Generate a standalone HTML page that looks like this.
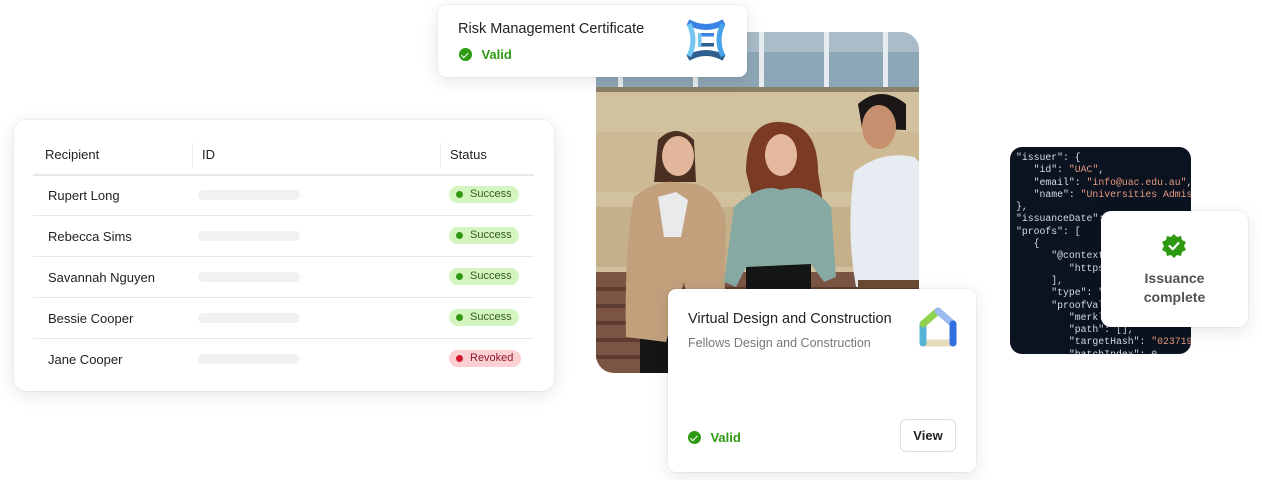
<!DOCTYPE html>
<html><head><meta charset="utf-8"><style>
*{margin:0;padding:0;box-sizing:border-box}
body{width:1262px;height:480px;background:#fff;position:relative;overflow:hidden;font-family:"Liberation Sans",sans-serif;color:#1f2328}
.card{position:absolute;background:#fff;border-radius:12px;box-shadow:0 4px 18px rgba(0,0,0,.10),0 0 0 1px rgba(0,0,0,.04)}
.tbl{left:14px;top:120px;width:540px;height:271px}
.th{position:absolute;top:147px;font-size:13px;color:#222}
.row{position:absolute;left:33px;width:501px;height:1px;background:#e6e8eb}
.name{position:absolute;left:48px;font-size:13px;color:#222}
.bar{position:absolute;left:198px;width:102px;height:10px;border-radius:5px;background:#f0f1f3}
.pill{position:absolute;left:449px;width:70px;height:17px;border-radius:9px;background:#d5f5c0;font-size:11px;color:#2f5f17;line-height:17px;padding-left:21px}
.pill:before{content:"";position:absolute;left:7px;top:5px;width:7px;height:7px;border-radius:50%;background:#2e9a12}
.pill.r{background:#fcd0d3;color:#8a1d25;width:72px}
.pill.r:before{background:#d2162b}
.check{display:inline-block;width:13px;height:13px;border-radius:50%;background:#2e9a12;position:relative;vertical-align:-2px}
.check:after{content:"";position:absolute;left:4px;top:2.5px;width:3px;height:5.5px;border:solid #fff;border-width:0 1.6px 1.6px 0;transform:rotate(45deg)}
.valid{color:#2e9a12;font-size:13px;font-weight:bold}
.code{position:absolute;left:1010px;top:147px;width:181px;height:207px;background:#0b1220;border-radius:12px;overflow:hidden;font-family:"Liberation Mono",monospace;font-size:9.8px;line-height:12.3px;color:#d6dbe3;padding:5px 0 0 6px;white-space:pre}
.s{color:#e79a7e}
</style></head><body>

<div class="card tbl"></div>
<div class="th" style="left:45px">Recipient</div>
<div class="th" style="left:202px">ID</div>
<div class="th" style="left:450px">Status</div>
<div style="position:absolute;left:192px;top:143px;width:1px;height:24px;background:#eceef0"></div>
<div style="position:absolute;left:440px;top:143px;width:1px;height:24px;background:#eceef0"></div>
<div class="row" style="top:174px;height:1.5px"></div>
<div class="row" style="top:215px"></div>
<div class="row" style="top:256px"></div>
<div class="row" style="top:297px"></div>
<div class="row" style="top:338px"></div>
<div class="name" style="top:188px">Rupert Long</div>
<div class="name" style="top:229px">Rebecca Sims</div>
<div class="name" style="top:270px">Savannah Nguyen</div>
<div class="name" style="top:311px">Bessie Cooper</div>
<div class="name" style="top:352px">Jane Cooper</div>
<div class="bar" style="top:190px"></div>
<div class="bar" style="top:231px"></div>
<div class="bar" style="top:272px"></div>
<div class="bar" style="top:313px"></div>
<div class="bar" style="top:354px"></div>
<div class="pill" style="top:186px">Success</div>
<div class="pill" style="top:227px">Success</div>
<div class="pill" style="top:268px">Success</div>
<div class="pill" style="top:309px">Success</div>
<div class="pill r" style="top:350px">Revoked</div>

<svg style="position:absolute;left:596px;top:32px" width="323" height="341" viewBox="0 0 323 341">
<defs><clipPath id="c"><rect width="323" height="341" rx="18"/></clipPath></defs>
<g clip-path="url(#c)">
<rect width="323" height="341" fill="#cbb995"/>
<rect width="323" height="58" fill="#8ea7b6"/>
<rect x="0" y="0" width="323" height="20" fill="#a9bcc8"/>
<g fill="#e6ecef"><rect x="22" y="0" width="5" height="58"/><rect x="97" y="0" width="5" height="58"/><rect x="163" y="0" width="5" height="58"/><rect x="228" y="0" width="5" height="58"/><rect x="287" y="0" width="5" height="58"/></g>
<rect y="55" width="323" height="5" fill="#8c8068"/>
<rect y="60" width="323" height="180" fill="#d2c19f"/>
<rect y="100" width="323" height="60" fill="#c9b48d" opacity=".6"/>
<rect y="175" width="323" height="60" fill="#bda880" opacity=".7"/>
<rect y="240" width="323" height="101" fill="#7b5443"/>
<g fill="#5e3d30"><rect y="255" width="323" height="4"/><rect y="272" width="323" height="4"/><rect y="289" width="323" height="4"/><rect y="306" width="323" height="4"/><rect y="323" width="323" height="4"/></g>
<path d="M62 108 Q80 90 98 108 L100 150 L58 150 Z" fill="#4a2f22"/>
<ellipse cx="82" cy="124" rx="16" ry="20" fill="#e2b69a"/>
<rect x="44" y="285" width="38" height="56" fill="#151515"/>
<path d="M38 165 Q60 148 78 150 L100 152 Q125 160 130 190 L128 300 L100 310 L88 250 L70 310 L30 305 Q28 220 38 165 Z" fill="#c3a07c"/>
<path d="M62 165 L80 160 L92 168 L85 205 L68 205 Z" fill="#e9eaec"/>
<path d="M150 140 Q150 88 185 90 Q222 92 222 140 L232 200 L195 215 L165 200 Z" fill="#7b3a22"/>
<ellipse cx="185" cy="123" rx="16" ry="21" fill="#e5b99f"/>
<rect x="150" y="230" width="65" height="111" fill="#141616"/>
<path d="M138 175 Q165 150 185 158 Q215 150 235 175 L240 245 L228 250 L215 232 L150 235 L140 255 L128 250 Z" fill="#86aaa3"/>
<path d="M262 72 Q285 52 310 72 L310 98 L266 96 Z" fill="#1a1716"/>
<ellipse cx="283" cy="95" rx="17" ry="22" fill="#c6906e"/>
<path d="M258 140 Q285 118 318 125 L323 130 L323 255 L260 255 Q250 200 258 140 Z" fill="#e7ecf3"/>
<rect x="262" y="248" width="61" height="8" fill="#6b4a34"/>
</g>
</svg>

<div class="card" style="left:438px;top:5px;width:309px;height:72px;border-radius:8px">
  <div style="position:absolute;left:20px;top:16px;font-size:14.5px;color:#222">Risk Management Certificate</div>
  <div style="position:absolute;left:21px;top:41px"><span class="check"></span> <span class="valid" style="margin-left:5px">Valid</span></div>
  <svg style="position:absolute;left:247px;top:13px" width="42" height="44" viewBox="0 0 42 44">
    <path d="M3 4 Q21 14 39 4" stroke="#3b82e6" stroke-width="6" fill="none"/>
    <path d="M3 40 Q21 30 39 40" stroke="#2f5f8e" stroke-width="6" fill="none"/>
    <path d="M4 6 Q12 22 4 38" stroke="#74c6f2" stroke-width="5" fill="none"/>
    <path d="M38 6 Q30 22 38 38" stroke="#4aa3e8" stroke-width="5" fill="none"/>
    <rect x="13" y="15" width="16" height="3.5" fill="#3b82e6"/>
    <rect x="13" y="25" width="16" height="3.5" fill="#2f5f8e"/>
    <rect x="13" y="15" width="3.5" height="14" fill="#74c6f2"/>
  </svg>
</div>

<div class="card" style="left:668px;top:289px;width:308px;height:183px;border-radius:8px">
  <div style="position:absolute;left:20px;top:22px;font-size:14.5px;color:#222">Virtual Design and Construction</div>
  <div style="position:absolute;left:20px;top:47px;font-size:12.5px;color:#777">Fellows Design and Construction</div>
  <svg style="position:absolute;left:250px;top:18px" width="40" height="44" viewBox="0 0 40 44">
    <path d="M5 36 L35 36" stroke="#e6dcbc" stroke-width="7" stroke-linecap="round"/>
    <path d="M5 36 L5 17" stroke="#55b3d8" stroke-width="7" stroke-linecap="round"/>
    <path d="M5 17 L20 4" stroke="#8fd14f" stroke-width="7" stroke-linecap="round"/>
    <path d="M20 4 L35 17" stroke="#9bbcf0" stroke-width="7" stroke-linecap="round"/>
    <path d="M35 17 L35 36" stroke="#2f6fe0" stroke-width="7" stroke-linecap="round"/>
  </svg>
  <div style="position:absolute;left:20px;top:140px"><span class="check"></span> <span class="valid" style="margin-left:5px">Valid</span></div>
  <div style="position:absolute;left:232px;top:130px;width:56px;height:33px;border:1px solid #dcdfe3;border-radius:6px;font-size:13px;font-weight:bold;text-align:center;line-height:31px;color:#222">View</div>
</div>

<div class="code">"issuer": {
   "id": <span class="s">"UAC"</span>,
   "email": <span class="s">"info@uac.edu.au"</span>,
   "name": <span class="s">"Universities Admiss</span>
},
"issuanceDate":
"proofs": [
   {
      "@context
         "https
      ],
      "type": "
      "proofVal
         "merkl
         "path": [],
         "targetHash": <span class="s">"0237191</span>
         "batchIndex": 0</div>

<div class="card" style="left:1101px;top:211px;width:147px;height:116px;border-radius:10px">
  <svg style="position:absolute;left:60px;top:22px" width="26" height="26" viewBox="0 0 26 26">
    <path d="M13 1 L16 4 L20 3 L21 7 L25 9 L23 13 L25 17 L21 19 L20 23 L16 22 L13 25 L10 22 L6 23 L5 19 L1 17 L3 13 L1 9 L5 7 L6 3 L10 4 Z" fill="#2e9a12"/>
    <path d="M8.5 13 L11.8 16.2 L17.5 10" stroke="#fff" stroke-width="2.2" fill="none" stroke-linecap="round" stroke-linejoin="round"/>
  </svg>
  <div style="position:absolute;left:0;width:147px;top:58px;text-align:center;font-size:14px;line-height:19px;color:#333;font-weight:bold;opacity:.85">Issuance<br>complete</div>
</div>
</body></html>
